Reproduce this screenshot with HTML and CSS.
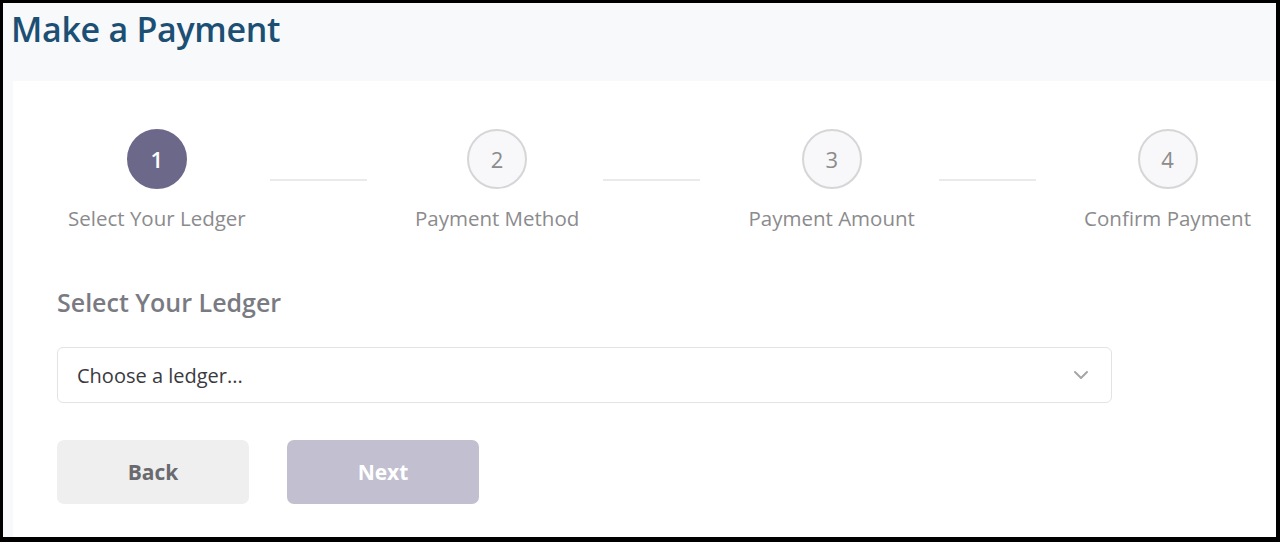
FILE: index.html
```html
<!DOCTYPE html>
<html lang="en">
<head>
<meta charset="utf-8">
<title>Make a Payment</title>
<link rel="stylesheet" href="styles.css">
</head>
<body>
<div class="frame">
  <header class="header">
    <h1 class="title">Make a Payment</h1>
  </header>
  <main class="card">
    <div class="stepper">
      <div class="step active">
        <div class="circle">1</div>
        <div class="label">Select Your Ledger</div>
      </div>
      <div class="connector"></div>
      <div class="step">
        <div class="circle">2</div>
        <div class="label">Payment Method</div>
      </div>
      <div class="connector"></div>
      <div class="step">
        <div class="circle">3</div>
        <div class="label">Payment Amount</div>
      </div>
      <div class="connector"></div>
      <div class="step">
        <div class="circle">4</div>
        <div class="label">Confirm Payment</div>
      </div>
    </div>

    <h2 class="section-title">Select Your Ledger</h2>

    <div class="select">
      <span class="select-text">Choose a ledger...</span>
      <svg class="chevron" width="16" height="10" viewBox="0 0 16 10" aria-hidden="true">
        <path d="M2 2 L8 8 L14 2" fill="none" stroke="#a6a6a6" stroke-width="2" stroke-linecap="round" stroke-linejoin="round"/>
      </svg>
    </div>

    <div class="actions">
      <button class="btn btn-back" type="button">Back</button>
      <button class="btn btn-next" type="button">Next</button>
    </div>
  </main>
</div>
</body>
</html>
```

FILE: styles.css
```css
html, body {
  margin: 0;
  padding: 0;
}

body {
  background: #000;
  font-family: "Open Sans", "Noto Sans", sans-serif;
}

.frame {
  margin: 3px 4px 5px 3px;
  height: 534px;
  background: #f8f9fb;
  display: flex;
  flex-direction: column;
  overflow: hidden;
}

.header {
  height: 78px;
  padding-left: 8px;
  box-sizing: border-box;
}

.title {
  margin: 0;
  font-size: 34px;
  line-height: 52px;
  font-weight: 600;
  color: #1c4f74;
  letter-spacing: -0.3px;
}

.card {
  flex: 1;
  margin-left: 10px;
  background: #fff;
  padding: 48px 0 0 44px;
}

.stepper {
  display: flex;
  align-items: center;
  padding: 0 25px 0 11px;
}

.step {
  display: flex;
  flex-direction: column;
  align-items: center;
}

.circle {
  width: 60px;
  height: 60px;
  box-sizing: border-box;
  border-radius: 50%;
  border: 2px solid #d6d6d9;
  background: #f8f8fa;
  color: #8c8c8c;
  display: flex;
  align-items: center;
  justify-content: center;
  font-size: 22px;
  font-weight: 400;
}

.step.active .circle {
  background: #6c688a;
  border-color: #6c688a;
  color: #fff;
  font-weight: 600;
}

.label {
  margin-top: 17px;
  line-height: 24px;
  font-size: 20.5px;
  color: #8b8b8e;
  white-space: nowrap;
}

.connector {
  flex: 1;
  height: 2px;
  background: #eaeaec;
  margin: 0 48px 0 24px;
}

.section-title {
  margin: 57px 0 0 0;
  line-height: 30px;
  font-size: 25px;
  font-weight: 600;
  color: #7a7b82;
}

.select {
  margin-top: 30px;
  width: 1055px;
  height: 56px;
  box-sizing: border-box;
  border: 1px solid #e3e3e6;
  border-radius: 6px;
  display: flex;
  align-items: center;
  justify-content: space-between;
  padding: 0 22px 0 19px;
}

.select-text {
  font-size: 20px;
  color: #3a3a3e;
}

.chevron {
  display: block;
}

.actions {
  margin-top: 37px;
  display: flex;
  gap: 38px;
}

.btn {
  width: 192px;
  height: 64px;
  border: none;
  border-radius: 7px;
  font-family: inherit;
  font-size: 21px;
  font-weight: 700;
}

.btn-back {
  background: #efefef;
  color: #6a6a6e;
}

.btn-next {
  background: #c1bfd0;
  color: #fff;
}
```
